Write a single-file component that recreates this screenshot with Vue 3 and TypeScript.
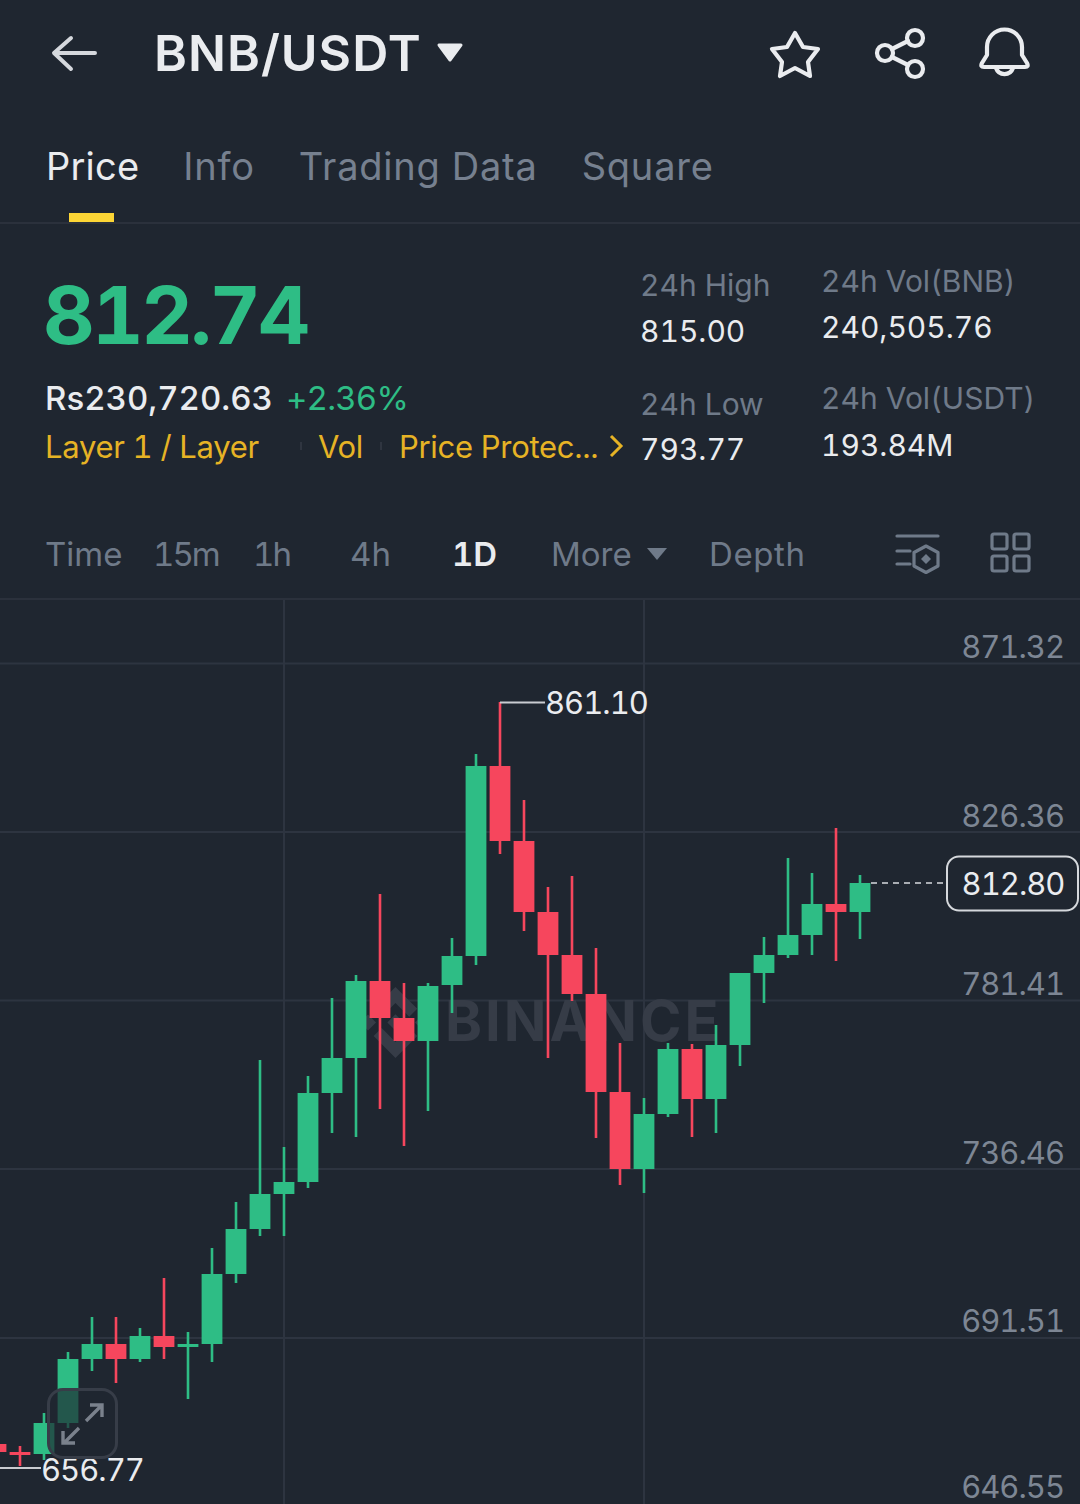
<template>
  <div class="page">
    <header class="top-bar">
      <svg class="back-icon" viewBox="50 34 50 38" width="50" height="38">
        <path d="M95 53H55M71 38L54 53L71 69" />
      </svg>
      <div class="pair">BNB/USDT</div>
      <svg class="pair-caret" viewBox="0 0 28 20" width="28" height="20">
        <path d="M3 2H25L14 17Z" />
      </svg>
      <div class="top-actions">
        <svg class="top-icon" viewBox="767 24 56 58" width="56" height="58">
          <path d="M795 33L803 47L818 49L808 62L810 76L795 68L780 76L782 62L772 49L787 47Z" />
        </svg>
        <svg class="top-icon" viewBox="871 24 58 58" width="58" height="58">
          <circle cx="915" cy="38" r="8" />
          <circle cx="885" cy="53" r="8" />
          <circle cx="915" cy="69" r="8" />
          <path d="M892 49L908 41M892 57L908 65" />
        </svg>
        <svg class="top-icon" viewBox="977 24 55 58" width="55" height="58">
          <path d="M987 55V47a17.5 17.5 0 0 1 35 0V55L1027 63q2 4-2 4H984q-4 0-2-4Z" />
          <path d="M996 68a9 9 0 0 0 17 0" />
        </svg>
      </div>
    </header>

    <nav class="tabs">
      <div v-for="tab in tabs" :key="tab" class="tab" :class="{ active: tab === 'Price' }">{{ tab }}</div>
    </nav>

    <section class="stats">
      <div class="stats-main">
        <div class="last-price">812.74</div>
        <div class="fiat-row">
          <span class="fiat">Rs230,720.63</span>
          <span class="change">+2.36%</span>
        </div>
        <div class="tag-row">
          <span class="tag tag-layer">Layer 1 / Layer</span>
          <i class="tag-sep"></i>
          <span class="tag">Vol</span>
          <i class="tag-sep"></i>
          <span class="tag tag-protect">Price Protec...</span>
          <svg class="tag-arrow" viewBox="0 0 16 24" width="16" height="24">
            <path d="M3 2L13 12L3 22" />
          </svg>
        </div>
      </div>
      <div class="stats-col col-low">
        <div class="stat-label">24h High</div>
        <div class="stat-value">815.00</div>
        <div class="stat-label next">24h Low</div>
        <div class="stat-value">793.77</div>
      </div>
      <div class="stats-col col-vol">
        <div class="stat-label">24h Vol(BNB)</div>
        <div class="stat-value">240,505.76</div>
        <div class="stat-label next">24h Vol(USDT)</div>
        <div class="stat-value">193.84M</div>
      </div>
    </section>

    <div class="toolbar">
      <span class="tool t-time">Time</span>
      <span class="tool t-15m">15m</span>
      <span class="tool t-1h">1h</span>
      <span class="tool t-4h">4h</span>
      <span class="tool t-1d">1D</span>
      <span class="tool t-more">
        More
        <svg viewBox="0 0 22 14" width="22" height="14"><path d="M1 1H21L11 13Z" /></svg>
      </span>
      <span class="tool t-depth">Depth</span>
      <svg class="tool-icon icon-settings" viewBox="895 530 48 46" width="48" height="46">
        <path d="M897 536H938M897 551H910M897 564H910" />
        <path d="M926 546L938 552.5V566L926 572.5L914 566V552.5Z" />
        <path class="solid" d="M926 554L931 559L926 564L921 559Z" />
      </svg>
      <svg class="tool-icon" viewBox="989 531 44 44" width="44" height="44">
        <rect x="992" y="534" width="15" height="15" rx="2" />
        <rect x="1014" y="534" width="15" height="15" rx="2" />
        <rect x="992" y="556" width="15" height="15" rx="2" />
        <rect x="1014" y="556" width="15" height="15" rx="2" />
      </svg>
    </div>

    <div class="chart">
      <svg class="plot" viewBox="0 600 1080 904" width="1080" height="904">
        <line v-for="y in gridRows" :key="y" class="grid" x1="0" x2="1080" :y1="y" :y2="y" />
        <line class="grid" x1="284" x2="284" y1="600" y2="1504" />
        <line class="grid" x1="644" x2="644" y1="600" y2="1504" />

        <g class="watermark">
          <path transform="translate(360 987) scale(0.56)" d="M38.73 53.2l24.59-24.58 24.6 24.6 14.3-14.31L63.32 0 24.42 38.9zM0 63.31l14.3-14.3 14.31 14.3-14.31 14.3zM38.73 73.41l24.59 24.59 24.6-24.6 14.31 14.29-38.9 38.91-38.91-38.9v-.03zM98.02 63.31l14.3-14.3 14.31 14.3-14.31 14.3zM77.83 63.3L63.32 48.78 52.59 59.51l-1.24 1.23-2.54 2.54 14.51 14.52 14.51-14.5z" />
          <text x="445" y="1041">BINANCE</text>
        </g>

        <g v-for="c in candles" :key="c.x" :class="c.up ? 'up' : 'down'">
          <rect :x="c.x - 1.3" :y="c.high" width="2.6" :height="c.low - c.high" />
          <rect :x="c.x - 10.4" :y="c.top" width="20.8" :height="c.bottom - c.top" />
        </g>

        <text v-for="a in axis" :key="a.label" class="axis" x="1064" :y="a.y" text-anchor="end">{{ a.label }}</text>

        <path class="marker" d="M500 702.5H545" />
        <text class="mark-text" x="545" y="714">861.10</text>
        <path class="marker" d="M0 1468H41" />
        <text class="mark-text" x="41" y="1481">656.77</text>

        <line class="last-line" x1="871" x2="947" y1="883" y2="883" />
        <rect class="last-box" x="947" y="856.5" width="131" height="54" rx="12" />
        <text class="mark-text" x="1013" y="895" text-anchor="middle">812.80</text>
      </svg>

      <button class="expand">
        <svg viewBox="0 0 71 71" width="71" height="71">
          <path d="M39 33L54 18M43 17H55V29M32 40L17 55M16 43V55H28" />
        </svg>
      </button>
    </div>
  </div>
</template>

<script setup lang="ts">
interface Candle {
  x: number
  up: boolean
  top: number
  bottom: number
  high: number
  low: number
}

const tabs = ['Price', 'Info', 'Trading Data', 'Square']
const gridRows = [663.5, 832, 1000.5, 1169, 1338]

const axis = [
  { label: '871.32', y: 658 },
  { label: '826.36', y: 827 },
  { label: '781.41', y: 995 },
  { label: '736.46', y: 1164 },
  { label: '691.51', y: 1332 },
  { label: '646.55', y: 1498 }
]

const c = (x: number, up: boolean, top: number, bottom: number, high: number, low: number): Candle => ({
  x,
  up,
  top,
  bottom,
  high,
  low
})

const candles: Candle[] = [
  c(-4, false, 1444, 1452, 1444, 1452),
  c(20, false, 1452, 1455, 1446, 1466),
  c(44, true, 1423, 1454, 1413, 1460),
  c(68, true, 1359, 1423, 1352, 1428),
  c(92, true, 1344, 1359, 1317, 1371),
  c(116, false, 1344, 1359, 1317, 1383),
  c(140, true, 1336, 1359, 1328, 1362),
  c(164, false, 1336, 1347, 1278, 1359),
  c(188, true, 1344, 1347, 1332, 1399),
  c(212, true, 1274, 1344, 1248, 1362),
  c(236, true, 1229, 1274, 1202, 1283),
  c(260, true, 1194, 1229, 1060, 1236),
  c(284, true, 1182, 1194, 1147, 1236),
  c(308, true, 1093, 1182, 1076, 1188),
  c(332, true, 1058, 1093, 998, 1133),
  c(356, true, 981, 1058, 975, 1137),
  c(380, false, 981, 1018, 894, 1109),
  c(404, false, 1018, 1041, 983, 1146),
  c(428, true, 986, 1041, 983, 1111),
  c(452, true, 956, 985, 938, 1013),
  c(476, true, 766, 956, 754, 965),
  c(500, false, 766, 841, 702, 854),
  c(524, false, 841, 912, 800, 931),
  c(548, false, 912, 955, 887, 1058),
  c(572, false, 955, 994, 876, 1001),
  c(596, false, 994, 1092, 948, 1138),
  c(620, false, 1092, 1169, 1043, 1185),
  c(644, true, 1114, 1169, 1098, 1193),
  c(668, true, 1049, 1114, 1043, 1117),
  c(692, false, 1049, 1099, 1044, 1137),
  c(716, true, 1045, 1099, 1025, 1133),
  c(740, true, 973, 1045, 973, 1066),
  c(764, true, 955, 973, 937, 1003),
  c(788, true, 935, 955, 858, 958),
  c(812, true, 904, 935, 873, 955),
  c(836, false, 904, 912, 828, 961),
  c(860, true, 883, 912, 875, 939)
]
</script>

<style scoped>
.page {
  width: 1080px;
  height: 1504px;
  overflow: hidden;
  background: #1f2630;
  color: #eaecef;
  font-family: Inter, "Liberation Sans", sans-serif;
  font-variant-numeric: tabular-nums;
  white-space: nowrap;
}

.top-bar {
  display: flex;
  align-items: center;
  height: 106px;
  padding: 0 48px 0 50px;
}

.back-icon path {
  fill: none;
  stroke: #d5d8dd;
  stroke-width: 4;
  stroke-linecap: round;
  stroke-linejoin: round;
}

.pair {
  margin-left: 54px;
  font-size: 50px;
  font-weight: 600;
  letter-spacing: 1px;
}

.pair-caret {
  margin-left: 14px;
  fill: #eaecef;
  stroke: #eaecef;
  stroke-width: 3;
  stroke-linejoin: round;
}

.top-actions {
  display: flex;
  align-items: center;
  gap: 48px;
  margin-left: auto;
}

.top-icon {
  fill: none;
  stroke: #eaecef;
  stroke-width: 4.2;
  stroke-linecap: round;
  stroke-linejoin: round;
}

.tabs {
  display: flex;
  gap: 44px;
  height: 118px;
  padding: 0 0 0 46px;
  border-bottom: 2px solid #2b313c;
  box-sizing: border-box;
}

.tab {
  position: relative;
  padding-top: 37px;
  font-size: 38px;
  line-height: 46px;
  letter-spacing: 0.8px;
  color: #76808f;
}

.tab.active {
  letter-spacing: 0.2px;
  color: #eaecef;
}

.tab.active::after {
  content: "";
  position: absolute;
  left: 50%;
  bottom: 0;
  width: 45px;
  height: 9px;
  margin-left: -24px;
  background: #fcd535;
}

.stats {
  display: flex;
  height: 284px;
  padding-left: 46px;
  box-sizing: border-box;
}

.stats-main {
  width: 594px;
  flex: none;
}

.last-price {
  margin-top: 45px;
  margin-left: -3px;
  font-size: 80px;
  line-height: 92px;
  font-weight: 700;
  letter-spacing: -2.6px;
  color: #2ebd85;
}

.fiat-row {
  display: flex;
  gap: 13px;
  margin-top: 17px;
  margin-left: -1px;
  font-size: 33px;
  line-height: 40px;
}

.fiat {
  font-weight: 500;
}

.change {
  letter-spacing: -0.8px;
  color: #2ebd85;
}

.tag-row {
  display: flex;
  align-items: center;
  margin-top: 8px;
  margin-left: -1px;
  height: 40px;
  font-size: 31px;
  letter-spacing: -0.3px;
  color: #e6b325;
}

.tag-layer {
  width: 255px;
}

.tag-sep {
  width: 2px;
  height: 8px;
  background: #2f3540;
}

.tag-sep + .tag {
  margin-left: 16px;
}

.tag:not(.tag-layer) + .tag-sep {
  margin-left: 17px;
}

.tag-sep + .tag-protect {
  margin-left: 17px;
}

.tag-arrow {
  margin-left: 10px;
  fill: none;
  stroke: #e6b325;
  stroke-width: 3;
}

.stats-col {
  width: 181px;
  flex: none;
  padding-top: 38px;
}

.col-low {
  padding-top: 42px;
}

.stat-label {
  font-size: 30px;
  line-height: 38px;
  color: #6f7a89;
}

.stat-value {
  margin-top: 8px;
  font-size: 30px;
  line-height: 38px;
  color: #eaecef;
}

.stat-label.next {
  margin-top: 33px;
}

.col-low .stat-label.next {
  margin-top: 35px;
}

.col-low .next + .stat-value {
  margin-top: 7px;
}

.col-vol .next + .stat-value {
  margin-top: 9px;
}

.toolbar {
  display: flex;
  align-items: center;
  height: 92px;
  padding-left: 45px;
  box-sizing: border-box;
  border-bottom: 2px solid #2b313c;
}

.tool {
  padding-top: 2px;
  font-size: 33px;
  color: #6f7a89;
  flex: none;
}

.t-time { width: 108px; }
.t-15m { width: 100px; letter-spacing: -2px; }
.t-1h { width: 97px; letter-spacing: -2px; }
.t-4h { width: 102px; }
.t-depth { width: 186px; letter-spacing: 0.6px; }

.t-1d {
  width: 99px;
  color: #eaecef;
  font-weight: 600;
}

.t-more {
  display: flex;
  align-items: center;
  gap: 14px;
  width: 158px;
  fill: #6f7a89;
}

.tool-icon {
  flex: none;
  fill: none;
  stroke: #6f7a89;
  stroke-width: 3.2;
  stroke-linecap: round;
  stroke-linejoin: round;
}

.tool-icon .solid {
  fill: #6f7a89;
  stroke: none;
}

.icon-settings {
  margin-right: 46px;
}

.chart {
  position: relative;
  height: 904px;
}

.plot {
  display: block;
}

.grid {
  stroke: #2d3440;
  stroke-width: 2;
}

.watermark {
  fill: #363c47;
}

.watermark text {
  font-size: 56px;
  font-weight: 700;
  letter-spacing: 3px;
}

.up rect {
  fill: #2ebd85;
}

.down rect {
  fill: #f6465d;
}

.axis {
  font-size: 31px;
  letter-spacing: -1px;
  fill: #7d8694;
}

.mark-text {
  font-size: 31px;
  letter-spacing: -1px;
  fill: #eaecef;
}

.marker {
  fill: none;
  stroke: #c9ccd1;
  stroke-width: 2;
}

.last-line {
  stroke: #a9adb3;
  stroke-width: 2;
  stroke-dasharray: 6 5;
}

.last-box {
  fill: #1f2630;
  stroke: #d5d8dc;
  stroke-width: 2;
}

.expand {
  position: absolute;
  left: 47px;
  bottom: 45px;
  width: 71px;
  height: 71px;
  padding: 0;
  border: 3px solid #373d48;
  border-radius: 16px;
  background: rgba(31, 38, 48, 0.68);
  box-sizing: border-box;
  display: flex;
  align-items: center;
  justify-content: center;
}

.expand svg {
  flex: none;
  fill: none;
  stroke: #7a818c;
  stroke-width: 3.4;
}
</style>
